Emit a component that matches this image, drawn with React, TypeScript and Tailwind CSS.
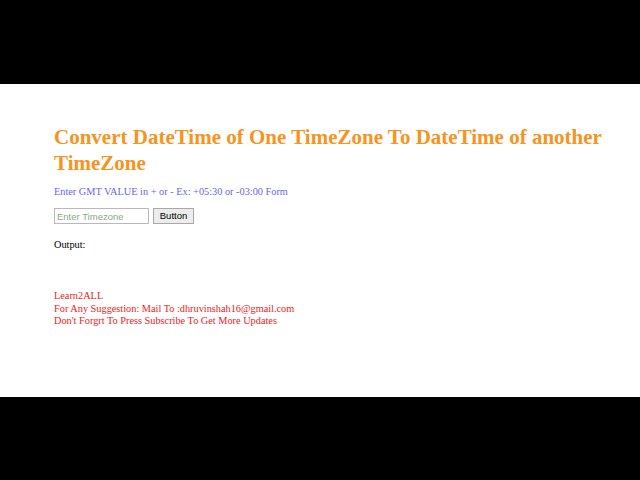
export default function App() {
  return (
    <div className="w-[640px] h-[480px] bg-black flex flex-col">
      <div className="h-[84px] bg-black" />
      <div className="h-[313px] bg-white pl-[54px] pr-[20px] pt-[40px] font-['Liberation_Serif',serif]">
        <h1 className="text-[21px] leading-[26px] font-bold text-[#f7941d]">
          Convert DateTime of One TimeZone To DateTime of another TimeZone
        </h1>
        <p className="mt-[10px] text-[10.3px] leading-[12px] text-[#6666ee]">
          Enter GMT VALUE in + or - Ex: +05:30 or -03:00 Form
        </p>
        <div className="mt-[10px] flex items-center gap-[4px] font-['Liberation_Sans',sans-serif]">
          <input
            placeholder="Enter Timezone"
            className="w-[95px] h-[16px] border border-[#b8b8b8] px-[2px] text-[9.5px] placeholder:text-[#8aa88a] outline-none"
          />
          <button className="h-[16px] w-[41px] border border-[#a8a8a8] bg-[#ececec] text-[9.5px] leading-none text-black">
            Button
          </button>
        </div>
        <p className="mt-[15px] text-[10.3px] leading-[12px] text-black">Output:</p>
        <div className="mt-[39px] text-[10.3px] leading-[12.5px] text-[#ee2222]">
          <p>Learn2ALL</p>
          <p>For Any Suggestion: Mail To :dhruvinshah16@gmail.com</p>
          <p>Don't Forgrt To Press Subscribe To Get More Updates</p>
        </div>
      </div>
      <div className="flex-1 bg-black" />
    </div>
  )
}
